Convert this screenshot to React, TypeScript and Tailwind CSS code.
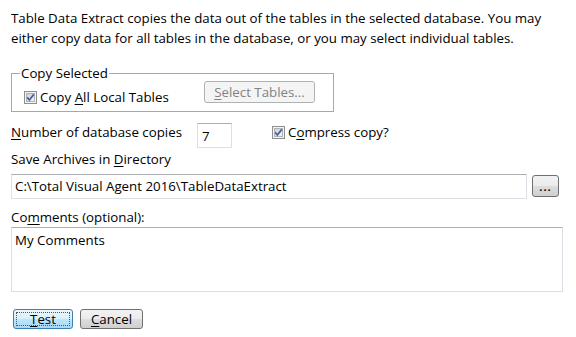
import React from 'react';

const Key: React.FC<{ children: React.ReactNode }> = ({ children }) => (
  <span className="underline underline-offset-[2px] decoration-[1px]">{children}</span>
);

const CheckBox: React.FC = () => (
  <svg width="13" height="13" viewBox="0 0 13 13" className="shrink-0">
    <defs>
      <linearGradient id="cbfill" x1="0" y1="0" x2="1" y2="1">
        <stop offset="0" stopColor="#cbcfd5" />
        <stop offset="1" stopColor="#f6f6f6" />
      </linearGradient>
    </defs>
    <rect x="0.5" y="0.5" width="12" height="12" fill="#f4f4f4" stroke="#8e8f8f" />
    <rect x="2.5" y="2.5" width="8" height="8" fill="url(#cbfill)" stroke="#aeb3b9" />
    <path d="M3.2 6.4 L5.4 9 L9.8 3.4" fill="none" stroke="#4a5f97" strokeWidth="1.7" />
  </svg>
);

const WinButton: React.FC<{ className?: string; children: React.ReactNode }> = ({ className, children }) => (
  <div
    className={`flex items-center justify-center rounded-[3px] border border-[#707070] bg-[linear-gradient(#f2f2f2_0%,#ebebeb_50%,#dddddd_51%,#cfcfcf_100%)] ${className ?? ''}`}
  >
    {children}
  </div>
);

export default function App() {
  return (
    <div
      className="w-[576px] h-[337px] bg-white pl-[11px] pt-[8px] text-[13.3px] text-black leading-[20px] overflow-hidden"
      style={{ fontFamily: '"Open Sans", "Noto Sans", sans-serif' }}
    >
      <p className="leading-[20px] whitespace-nowrap">
        Table Data Extract copies the data out of the tables in the selected database. You may
        <br />
        either copy data for all tables in the database, or you may select individual tables.
      </p>

      {/* Copy Selected group */}
      <div className="relative mt-[25px] w-[323px] h-[39px] border border-[#a8a8a8] flex items-start pl-[12px] pt-[7px]">
        <span className="absolute left-[8px] -top-[10px] bg-white px-[1px] leading-[18px]">Copy Selected</span>
        <div className="w-[180px] mt-[9px] flex items-center gap-[3px] leading-[14px]">
          <CheckBox />
          <span>
            Copy <Key>A</Key>ll Local Tables
          </span>
        </div>
        <div className="w-[111px] h-[22px] flex items-center justify-center rounded-[3px] border border-[#adb2b5] bg-[#f4f4f4] text-[#838383]">
          <span>
            <Key>S</Key>elect Tables...
          </span>
        </div>
      </div>

      {/* Number of copies row */}
      <div className="mt-[11px] flex items-start h-[25px]">
        <span className="w-[186px] leading-[18px]">
          <Key>N</Key>umber of database copies
        </span>
        <div className="w-[35px] h-[25px] border border-[#dbdfe6] border-t-[#abadb3] pl-[4px] leading-[25px]">
          7
        </div>
        <div className="ml-[40px] mt-[2px] flex items-center gap-[3px] leading-[14px]">
          <CheckBox />
          <span>
            C<Key>o</Key>mpress copy?
          </span>
        </div>
      </div>

      <div className="mt-[2px] leading-[18px]">
        Save Archives in <Key>D</Key>irectory
      </div>

      <div className="mt-[6px] flex items-start">
        <div className="w-[516px] h-[25px] border border-[#dbdfe6] border-t-[#abadb3] pl-[3px] leading-[23px]">
          C:\Total Visual Agent 2016\TableDataExtract
        </div>
        <WinButton className="ml-[5px] mt-[1px] w-[27px] h-[22px]">
          <span className="font-bold leading-[10px] tracking-[1px] text-[11px] mt-[2px]">...</span>
        </WinButton>
      </div>

      <div className="mt-[9px] leading-[18px]">
        Co<Key>m</Key>ments (optional):
      </div>

      <div className="mt-[1px] w-[552px] h-[65px] border border-[#dbdfe6] border-t-[#abadb3] pl-[3px] pt-[2px] leading-[20px]">
        My Comments
      </div>

      <div className="mt-[17px] ml-[2px] flex gap-[7px]">
        <div className="w-[60px] h-[20px] rounded-[3px] border border-[#3c7fb1] bg-[linear-gradient(#eaf6fd_0%,#d9f0fc_50%,#bee6fd_51%,#a7d9f5_100%)] p-[2px]">
          <div className="w-full h-full border border-dotted border-[#555] flex items-center justify-center leading-[14px]">
            <span>
              <Key>T</Key>est
            </span>
          </div>
        </div>
        <WinButton className="w-[63px] h-[20px] leading-[14px]">
          <span>
            <Key>C</Key>ancel
          </span>
        </WinButton>
      </div>
    </div>
  );
}
